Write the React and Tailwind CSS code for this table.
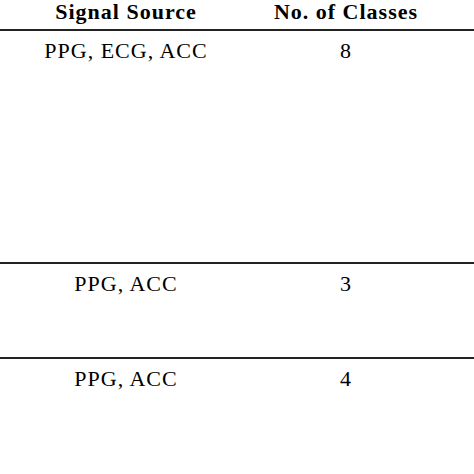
import React from 'react';

const rows = [
  { source: 'PPG, ECG, ACC', classes: '8', height: 'h-[233px]' },
  { source: 'PPG, ACC', classes: '3', height: 'h-[95px]' },
  { source: 'PPG, ACC', classes: '4', height: 'h-[120px]' },
];

const App = () => {
  return (
    <div className="w-[474px] h-[474px] overflow-hidden bg-white text-black" style={{ fontFamily: '"Liberation Serif", "Times New Roman", serif' }}>
      <div className="flex h-[31px] border-b-2 border-[#222]">
        <div className="w-[252px] text-center text-[22px] tracking-[1px] font-bold leading-[22px] pt-[1px]">Signal Source</div>
        <div className="w-[188px] text-center text-[22px] tracking-[1px] font-bold leading-[22px] pt-[1px]">No. of Classes</div>
      </div>
      {rows.map((row, i) => (
        <div key={i} className={`flex ${row.height} ${i < rows.length - 1 ? 'border-b-2 border-[#222]' : ''}`}>
          <div className="w-[252px] text-center text-[22px] tracking-[1px] leading-none pt-[9px]">{row.source}</div>
          <div className="w-[188px] text-center text-[22px] tracking-[1px] leading-none pt-[9px]">{row.classes}</div>
        </div>
      ))}
    </div>
  );
};

export default App;
